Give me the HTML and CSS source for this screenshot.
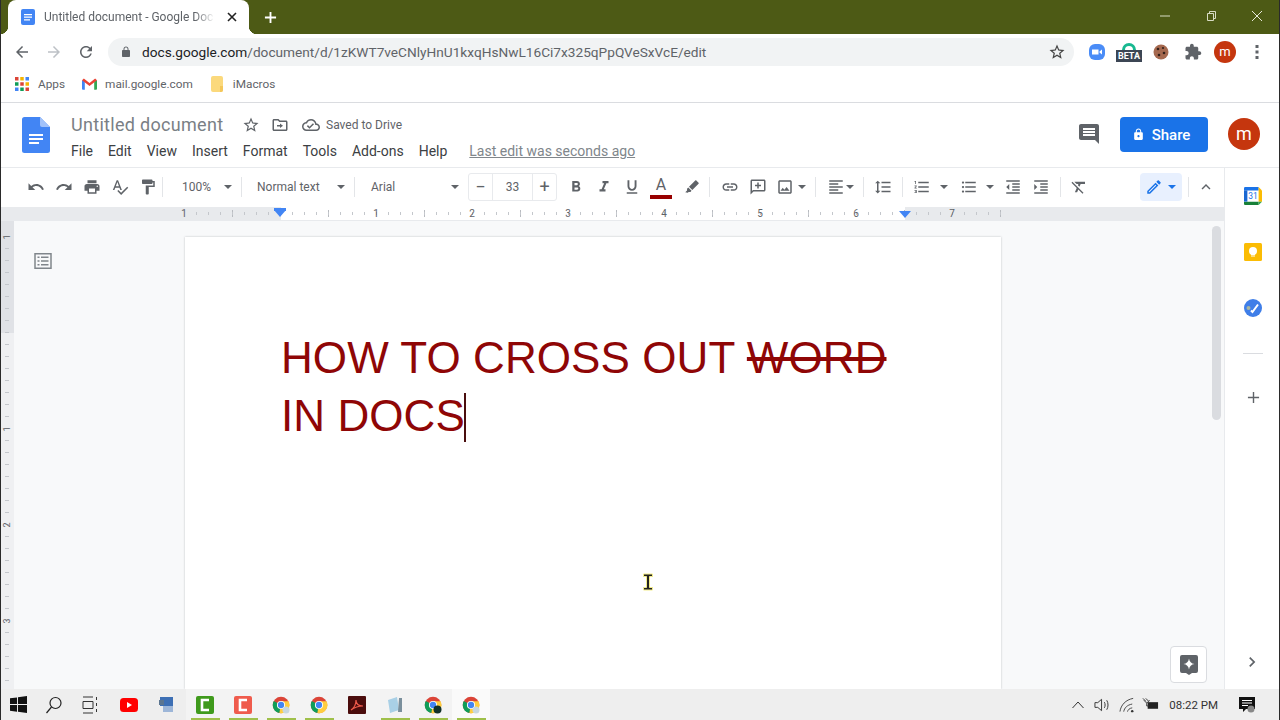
FILE: index.html
```html
<!DOCTYPE html>
<html>

<head>
    <meta charset="UTF-8">
    <title>Untitled document - Google Docs</title>
    <link rel="stylesheet" href="styles.css">
</head>

<body>
    <svg class="defs" width="0" height="0">
        <symbol id="chrome" viewBox="0 0 24 24">
            <circle cx="12" cy="12" r="11" fill="#db4437"></circle>
            <path d="M12 12 L2.4 6.6 A11 11 0 0 0 10 22.8 Z" fill="#0f9d58"></path>
            <path d="M12 7 H22 A11 11 0 0 1 10 22.8 Z" fill="#ffcd40"></path>
            <circle cx="12" cy="12" r="5.4" fill="#fff"></circle>
            <circle cx="12" cy="12" r="4.2" fill="#4285f4"></circle>
        </symbol>
    </svg>

    <div class="tabstrip">
        <div class="tab">
            <svg class="favicon" viewBox="0 0 16 16"><rect x="1" width="14" height="16" rx="2" fill="#4285f4"></rect><path d="M4 5h8v1.2H4zM4 7.6h8v1.2H4zM4 10.2h6v1.2H4z" fill="#fff"></path></svg>
            <span class="tab-title">Untitled document - Google Doc</span>
            <svg class="tab-x" viewBox="0 0 12 12"><path d="M2 2l8 8M10 2l-8 8" stroke="#222" stroke-width="1.6"></path></svg>
        </div>
        <svg class="newtab" viewBox="0 0 14 14"><path d="M7 1v12M1 7h12" stroke="#fff" stroke-width="2"></path></svg>
        <div class="winctl">
            <svg viewBox="0 0 12 12"><path d="M1 6h10" stroke="#d8dcc4"></path></svg>
            <svg viewBox="0 0 12 12"><path d="M2.5 3.5h6v7h-6zM4.5 3.5v-2h6v7h-2" fill="none" stroke="#d8dcc4"></path></svg>
            <svg viewBox="0 0 12 12"><path d="M1 1l10 10M11 1L1 11" stroke="#e6e8d8"></path></svg>
        </div>
    </div>

    <div class="omnirow">
        <svg class="nav" viewBox="0 0 24 24"><path fill="#5f6368" d="M20 11H7.83l5.59-5.59L12 4l-8 8 8 8 1.41-1.41L7.83 13H20v-2z"></path></svg>
        <svg class="nav" viewBox="0 0 24 24"><path fill="#bdc1c6" d="M12 4l-1.41 1.41L16.17 11H4v2h12.17l-5.58 5.59L12 20l8-8z"></path></svg>
        <svg class="nav" viewBox="0 0 24 24"><path fill="#5f6368" d="M17.65 6.35C16.2 4.9 14.21 4 12 4c-4.42 0-7.99 3.58-7.99 8s3.57 8 7.99 8c3.73 0 6.84-2.55 7.73-6h-2.08c-.82 2.33-3.04 4-5.65 4-3.31 0-6-2.69-6-6s2.69-6 6-6c1.66 0 3.14.69 4.22 1.78L13 11h7V4l-2.35 2.35z"></path></svg>
        <div class="omnibox">
            <svg class="lock" viewBox="0 0 24 24"><path fill="#5f6368" d="M18 8h-1V6c0-2.76-2.24-5-5-5S7 3.24 7 6v2H6c-1.1 0-2 .9-2 2v10c0 1.1.9 2 2 2h12c1.1 0 2-.9 2-2V10c0-1.1-.9-2-2-2zm-2.900 0H8.900V6c0-1.710 1.390-3.100 3.100-3.100s3.100 1.390 3.100 3.100v2z"></path></svg>
            <span class="url"><b>docs.google.com</b>/document/d/1zKWT7veCNlyHnU1kxqHsNwL16Ci7x325qPpQVeSxVcE/edit</span>
            <svg class="omni-star" viewBox="0 0 24 24"><path fill="#444" d="M22 9.240l-7.190-.620L12 2 9.190 8.630 2 9.240l5.460 4.730L5.820 21 12 17.270 18.180 21l-1.630-7.030L22 9.240zM12 15.400l-3.760 2.270 1-4.280-3.320-2.880 4.380-.380L12 6.100l1.710 4.040 4.380.380-3.320 2.880 1 4.280L12 15.400z"></path></svg>
        </div>
        <div class="ext">
            <svg viewBox="0 0 18 18"><rect x="1" y="1" width="16" height="16" rx="6" fill="#4a8cf7"></rect><path d="M4 6.500h6.500v5H4zM11.500 8.500l2.500-2v5l-2.500-2z" fill="#fff"></path></svg>
            <span class="beta">
                <svg viewBox="0 0 20 10"><path d="M3 10a7 7 0 0 1 14 0h-3a4 4 0 0 0-8 0z" fill="#17b890"></path></svg>
                <span class="beta-tag">BETA</span>
            </span>
            <svg viewBox="0 0 18 18"><circle cx="9" cy="9" r="7.500" fill="#a5694f"></circle><circle cx="6" cy="6" r="1.300" fill="#33201a"></circle><circle cx="11" cy="5" r="1.100" fill="#33201a"></circle><circle cx="12" cy="10" r="1.300" fill="#33201a"></circle><circle cx="7" cy="12" r="1.300" fill="#33201a"></circle></svg>
            <svg viewBox="0 0 24 24"><path fill="#5f6368" d="M20.500 11H19V7c0-1.100-.9-2-2-2h-4V3.500C13 2.120 11.880 1 10.500 1S8 2.120 8 3.500V5H4c-1.100 0-1.990.9-1.990 2v3.800H3.500c1.490 0 2.700 1.210 2.700 2.700s-1.210 2.700-2.700 2.700H2V20c0 1.100.9 2 2 2h3.800v-1.500c0-1.490 1.210-2.700 2.700-2.700 1.490 0 2.700 1.210 2.700 2.700V22H17c1.100 0 2-.9 2-2v-4h1.500c1.380 0 2.500-1.120 2.500-2.500S21.880 11 20.500 11z"></path></svg>
            <span class="chrome-avatar">m</span>
            <svg viewBox="0 0 18 18"><path fill="#5f6368" d="M7.500 2h3v3h-3zM7.500 7.500h3v3h-3zM7.500 13h3v3h-3z"></path></svg>
        </div>
    </div>

    <div class="bookmarks">
        <span class="bm">
            <svg class="apps" viewBox="0 0 12 12"><path fill="#db4437" d="M0 0h3v3H0z"></path><path fill="#f4b400" d="M4.500 0h3v3h-3z"></path><path fill="#4285f4" d="M9 0h3v3H9z"></path><path fill="#0f9d58" d="M0 4.500h3v3H0z"></path><path fill="#db4437" d="M4.500 4.500h3v3h-3z"></path><path fill="#f4b400" d="M9 4.500h3v3H9z"></path><path fill="#4285f4" d="M0 9h3v3H0z"></path><path fill="#0f9d58" d="M4.500 9h3v3h-3z"></path><path fill="#db4437" d="M9 9h3v3H9z"></path></svg>
            Apps
        </span>
        <span class="bm">
            <svg class="gmail" viewBox="0 0 16 12"><path fill="#4285f4" d="M0 2h3v10H1a1 1 0 0 1-1-1z"></path><path fill="#34a853" d="M13 2h3v9a1 1 0 0 1-1 1h-2z"></path><path fill="#ea4335" d="M0 2l2-2 6 5 6-5 2 2-8 6z"></path></svg>
            mail.google.com
        </span>
        <span class="bm">
            <svg class="folder" viewBox="0 0 14 16"><path fill="#fbd97c" d="M1 2a2 2 0 0 1 2-2h8a2 2 0 0 1 2 2v12a2 2 0 0 1-2 2H3a2 2 0 0 1-2-2z"></path><path fill="#f4c75a" d="M10 10h3v4a2 2 0 0 1-2 2h-1z"></path></svg>
            iMacros
        </span>
    </div>

    <div class="docs-head">
        <svg class="docs-logo" viewBox="0 0 28 36"><path fill="#4285f4" d="M2.500 0H18l10 10v23.500a2.500 2.500 0 0 1-2.500 2.500h-23A2.500 2.500 0 0 1 0 33.500v-31A2.500 2.500 0 0 1 2.500 0z"></path><path fill="#a1c2fa" d="M18 0l10 10H20a2 2 0 0 1-2-2z"></path><path fill="#fff" d="M7 17h14v2H7zM7 21h14v2H7zM7 25h10v2H7z"></path></svg>
        <div class="docs-title">
            <div class="title-row">
                <span class="doc-name">Untitled document</span>
                <svg class="ti star" viewBox="0 0 24 24"><path fill="#5f6368" d="M22 9.240l-7.190-.620L12 2 9.190 8.630 2 9.240l5.460 4.730L5.820 21 12 17.270 18.180 21l-1.630-7.030L22 9.240zM12 15.400l-3.760 2.270 1-4.280-3.320-2.880 4.380-.380L12 6.100l1.710 4.040 4.380.380-3.320 2.880 1 4.280L12 15.400z"></path></svg>
                <svg class="ti move" viewBox="0 0 24 24"><path fill="#5f6368" d="M20 6h-8l-2-2H4c-1.100 0-1.990.9-1.990 2L2 18c0 1.100.9 2 2 2h16c1.100 0 2-.9 2-2V8c0-1.100-.9-2-2-2zm0 12H4V6h5.170l2 2H20v10zm-8-4H8v-2h4v-2l4 3-4 3z"></path></svg>
                <svg class="ti cloud" viewBox="0 0 24 24"><path fill="#5f6368" d="M19.350 10.040C18.670 6.590 15.640 4 12 4 9.110 4 6.600 5.640 5.350 8.040 2.340 8.360 0 10.910 0 14c0 3.310 2.690 6 6 6h13c2.760 0 5-2.240 5-5 0-2.640-2.050-4.780-4.650-4.960zM19 18H6c-2.210 0-4-1.790-4-4 0-2.050 1.530-3.760 3.560-3.970l1.070-.11.5-.95C8.080 7.140 9.940 6 12 6c2.620 0 4.880 1.860 5.390 4.430l.3 1.500 1.530.11c1.560.1 2.780 1.410 2.780 2.960 0 1.650-1.350 3-3 3zm-9-3.820l-2.090-2.090L6.500 13.500 10 17l6.010-6.010-1.410-1.410z"></path></svg>
                <span class="saved">Saved to Drive</span>
            </div>
            <div class="menu">
                <span>File</span><span>Edit</span><span>View</span><span>Insert</span><span>Format</span><span>Tools</span><span>Add-ons</span><span>Help</span>
                <a class="last-edit">Last edit was seconds ago</a>
            </div>
        </div>
        <svg class="comments" viewBox="0 0 24 24"><path fill="#5f6368" d="M21.990 4c0-1.100-.89-2-1.990-2H4c-1.100 0-2 .9-2 2v12c0 1.100.9 2 2 2h14l4 4-.01-18zM18 14H6v-2h12v2zm0-3H6V9h12v2zm0-3H6V6h12v2z"></path></svg>
        <button class="share">
            <svg viewBox="0 0 24 24"><path fill="#fff" d="M18 8h-1V6c0-2.760-2.240-5-5-5S7 3.240 7 6v2H6c-1.100 0-2 .9-2 2v10c0 1.100.9 2 2 2h12c1.100 0 2-.9 2-2V10c0-1.100-.9-2-2-2zm-6 9c-1.100 0-2-.9-2-2s.9-2 2-2 2 .9 2 2-.9 2-2 2zm3.100-9H8.900V6c0-1.710 1.390-3.100 3.100-3.100 1.710 0 3.100 1.390 3.100 3.100v2z"></path></svg>
            Share
        </button>
        <span class="avatar">m</span>
    </div>

    <div class="workspace">
        <div class="editor">
            <div class="toolbar">
                <span class="ic"><svg viewBox="0 0 24 24"><path d="M12.500 8c-2.650 0-5.050.99-6.900 2.600L2 7v9h9l-3.620-3.620c1.390-1.160 3.160-1.880 5.120-1.880 3.540 0 6.550 2.310 7.600 5.500l2.370-.78C21.080 11.030 17.150 8 12.500 8z"></path></svg></span>
                <span class="ic"><svg viewBox="0 0 24 24"><path d="M18.400 10.600C16.550 8.990 14.150 8 11.500 8c-4.650 0-8.580 3.030-9.960 7.220L3.900 16c1.050-3.190 4.050-5.500 7.600-5.500 1.950 0 3.730.72 5.120 1.880L13 16h9V7l-3.600 3.600z"></path></svg></span>
                <span class="ic"><svg viewBox="0 0 24 24"><path d="M19 8H5c-1.660 0-3 1.340-3 3v6h4v4h12v-4h4v-6c0-1.660-1.340-3-3-3zm-3 11H8v-5h8v5zm3-7c-.55 0-1-.45-1-1s.45-1 1-1 1 .45 1 1-.45 1-1 1zm-1-9H6v4h12V3z"></path></svg></span>
                <span class="ic"><svg viewBox="0 0 24 24"><path d="M12.450 16h2.090L9.430 3H7.570L2.460 16h2.090l1.120-3h5.640l1.140 3zm-6.020-5L8.500 5.480 10.570 11H6.430zm15.160.59l-8.090 8.090L9.830 16l-1.410 1.410 5.090 5.090L23 13l-1.410-1.410z"></path></svg></span>
                <span class="ic"><svg viewBox="0 0 24 24"><path d="M18 4V3c0-.55-.45-1-1-1H5c-.55 0-1 .45-1 1v4c0 .55.45 1 1 1h12c.55 0 1-.45 1-1V6h1v4H9v11c0 .55.45 1 1 1h2c.55 0 1-.45 1-1v-9h8V4h-3z"></path></svg></span>
                <i class="sep"></i>
                <span class="sel sel-zoom">100%<i class="caret"></i></span>
                <i class="sep"></i>
                <span class="sel sel-style">Normal text<i class="caret"></i></span>
                <i class="sep"></i>
                <span class="sel sel-font">Arial<i class="caret"></i></span>
                <span class="size ml4">
                    <span class="size-btn">&minus;</span>
                    <span class="size-val">33</span>
                    <span class="size-btn">+</span>
                </span>
                <span class="ic ml5"><svg viewBox="0 0 24 24"><path d="M15.600 10.790c.97-.67 1.650-1.770 1.650-2.790 0-2.260-1.750-4-4-4H7v14h7.040c2.090 0 3.710-1.700 3.710-3.790 0-1.520-.86-2.820-2.150-3.420zM10 6.500h3c.83 0 1.500.67 1.500 1.500s-.67 1.500-1.500 1.500h-3v-3zm3.500 9H10v-3h3.500c.83 0 1.500.67 1.500 1.500s-.67 1.500-1.500 1.500z"></path></svg></span>
                <span class="ic"><svg viewBox="0 0 24 24"><path d="M10 4v3h2.210l-3.420 8H6v3h8v-3h-2.210l3.420-8H18V4z"></path></svg></span>
                <span class="ic"><svg viewBox="0 0 24 24"><path d="M12 17c3.310 0 6-2.690 6-6V3h-2.500v8c0 1.930-1.570 3.500-3.500 3.500S8.500 12.930 8.500 11V3H6v8c0 3.310 2.690 6 6 6zm-7 2v2h14v-2H5z"></path></svg></span>
                <span class="text-color ml1">A<i></i></span>
                <span class="ic ml3"><svg viewBox="0 0 24 24"><path d="M17.750 3.300l3 3c.4.4.4 1 0 1.400L12.400 16l-4.400-4.400 8.350-8.300c.4-.4 1-.4 1.400 0zM7 12.600l4.400 4.400-1.500 1.500H7.500L6.400 19.600 3 19l2.400-2.400v-2.400z"></path></svg></span>
                <i class="sep ml3"></i>
                <span class="ic ml6"><svg viewBox="0 0 24 24"><path d="M3.900 12c0-1.710 1.390-3.100 3.100-3.100h4V7H7c-2.760 0-5 2.240-5 5s2.240 5 5 5h4v-1.900H7c-1.710 0-3.100-1.390-3.100-3.100zM8 13h8v-2H8v2zm9-6h-4v1.900h4c1.710 0 3.100 1.390 3.100 3.100s-1.390 3.100-3.100 3.100h-4V17h4c2.760 0 5-2.240 5-5s-2.240-5-5-5z"></path></svg></span>
                <span class="ic"><svg viewBox="0 0 24 24"><path d="M20 2H4c-1.100 0-2 .9-2 2v18l4-4h14c1.100 0 2-.9 2-2V4c0-1.100-.9-2-2-2zm0 14H5.170L4 17.170V4h16v12zM11 6h2v3h3v2h-3v3h-2v-3H8V9h3z"></path></svg></span>
                <span class="ic mln1"><svg viewBox="0 0 24 24"><path d="M19 5v14H5V5h14m0-2H5c-1.100 0-2 .9-2 2v14c0 1.100.9 2 2 2h14c1.100 0 2-.9 2-2V5c0-1.100-.9-2-2-2zm-4.860 8.860l-3 3.870L9 13.140 6 17h12l-3.860-5.140z"></path></svg></span>
                <i class="caret mln1"></i>
                <i class="sep ml9"></i>
                <span class="ic ic-n ml10"><svg viewBox="0 0 24 24"><path d="M15 15H3v2h12v-2zm0-8H3v2h12V7zM3 13h18v-2H3v2zm0 8h18v-2H3v2zM3 3v2h18V3H3z"></path></svg></span>
                <i class="caret"></i>
                <i class="sep ml9"></i>
                <span class="ic ml5"><svg viewBox="0 0 24 24"><path d="M6 7h2.500L5 3.500 1.500 7H4v10H1.500L5 20.500 8.500 17H6V7zm4-2v2h12V5H10zm0 14h12v-2H10v2zm0-6h12v-2H10v2z"></path></svg></span>
                <i class="sep ml5"></i>
                <span class="ic ml5"><svg viewBox="0 0 24 24"><path d="M2 17h2v.5H3v1h1v.5H2v1h3v-4H2v1zm1-9h1V4H2v1h1v3zm-1 3h1.800L2 13.100v.9h3v-1H3.200L5 10.900V10H2v1zm5-6v2h14V5H7zm0 14h14v-2H7v2zm0-6h14v-2H7v2z"></path></svg></span>
                <i class="caret ml4"></i>
                <span class="ic ml7"><svg viewBox="0 0 24 24"><path d="M4 10.500c-.83 0-1.500.67-1.500 1.500s.67 1.500 1.500 1.500 1.500-.67 1.500-1.500-.67-1.500-1.500-1.500zm0-6c-.83 0-1.500.67-1.500 1.500S3.170 7.500 4 7.500 5.500 6.830 5.500 6 4.830 4.500 4 4.500zm0 12c-.83 0-1.500.68-1.500 1.500s.68 1.500 1.500 1.500 1.500-.68 1.500-1.500-.67-1.500-1.500-1.500zM7 19h14v-2H7v2zm0-6h14v-2H7v2zm0-8v2h14V5H7z"></path></svg></span>
                <i class="caret ml3"></i>
                <span class="ic ml5"><svg viewBox="0 0 24 24"><path d="M11 17h10v-2H11v2zm-8-5l4 4V8l-4 4zm0 9h18v-2H3v2zM3 3v2h18V3H3zm8 6h10V7H11v2zm0 4h10v-2H11v2z"></path></svg></span>
                <span class="ic"><svg viewBox="0 0 24 24"><path d="M3 21h18v-2H3v2zM3 8v8l4-4-4-4zm8 9h10v-2H11v2zM3 3v2h18V3H3zm8 6h10V7H11v2zm0 4h10v-2H11v2z"></path></svg></span>
                <i class="sep ml5"></i>
                <span class="ic ml4"><svg viewBox="0 0 24 24"><path d="M6 5v.18L8.820 8h2.400l-.72 1.680 2.100 2.100L14.210 8H20V5H6zM3.270 5L2 6.270l6.970 6.970L6.500 19h3l1.570-3.660L16.730 21 18 19.730 3.550 5.270 3.270 5z"></path></svg></span>
                <span class="mode">
                    <svg viewBox="0 0 24 24"><path d="M14.060 9.020l.92.92L5.920 19H5v-.92l9.060-9.060M17.660 3c-.25 0-.51.1-.7.29l-1.830 1.830 3.750 3.750 1.830-1.830c.39-.39.39-1.020 0-1.410l-2.340-2.340c-.2-.2-.45-.29-.71-.29zm-3.600 3.190L3 17.250V21h3.750L17.810 9.940l-3.750-3.750z"></path></svg>
                    <i class="caret"></i>
                </span>
                <i class="sep ml6"></i>
                <span class="ic ml3"><svg viewBox="0 0 24 24"><path d="M7.410 15.410L12 10.830l4.590 4.580L18 14l-6-6-6 6z"></path></svg></span>
            </div>

            <div class="ruler">
                <div class="ruler-track">
                    <div class="ruler-nums">
                        <span>1</span><span></span><span>1</span><span>2</span><span>3</span><span>4</span><span>5</span><span>6</span><span>7</span>
                    </div>
                </div>
                <i class="marker marker-left"></i>
                <i class="marker marker-right"></i>
            </div>

            <div class="canvas">
                <div class="vruler">
                    <span>1</span><span></span><span>1</span><span>2</span><span>3</span>
                </div>
                <svg class="outline" viewBox="0 0 18 18"><path fill="none" stroke="#80868b" stroke-width="1.500" d="M1 1.750h16v14.500H1z"></path><path fill="#80868b" d="M3.500 4.500h2v1.500h-2zM7 4.500h7.500v1.500H7zM3.500 8.200h2v1.500h-2zM7 8.200h7.500v1.500H7zM3.500 12h2v1.500h-2zM7 12h7.500v1.500H7z"></path></svg>
                <div class="page">
                    <p class="doc-text">HOW TO CROSS OUT <s>WORD</s> IN DOCS<i class="cursor"></i></p>
                </div>
                <i class="scrollthumb"></i>
                <svg class="ibeam" viewBox="0 0 12 18"><path fill="#222" stroke="#f4ee8a" stroke-width="1" d="M1.500 1h9v2.500H7.500v11h3V17h-9v-2.500h3v-11h-3z"></path></svg>
                <span class="explore">
                    <svg viewBox="0 0 18 20"><path fill="#5f6368" d="M2 0h14a2 2 0 0 1 2 2v14a2 2 0 0 1-2 2h-4l-3 2-3-2H2a2 2 0 0 1-2-2V2a2 2 0 0 1 2-2z"></path><path fill="#fff" d="M9 3.500c.5 3.200 2.300 5 5.500 5.500-3.200.5-5 2.300-5.500 5.500-.5-3.200-2.300-5-5.500-5.500 3.200-.5 5-2.300 5.500-5.500z"></path></svg>
                </span>
            </div>
        </div>

        <aside class="sidepanel">
            <svg class="side-ic side-cal" viewBox="1 1 16 16"><path fill="#fff" d="M4 4h10v10H4z"></path><path fill="#1a73e8" d="M1 4V2a1 1 0 0 1 1-1h12v3z"></path><path fill="#188038" d="M1 14h13v3H2a1 1 0 0 1-1-1z"></path><path fill="#1967d2" d="M1 4h3v10H1z"></path><path fill="#fbbc04" d="M14 1l3 3v10h-3z"></path><path fill="#34a853" d="M14 14h3l-3 3z"></path><text x="9" y="11.800" font-size="7.500" text-anchor="middle" fill="#1a73e8" font-family="Roboto">31</text></svg>
            <svg class="side-ic side-keep" viewBox="0 0 18 18"><rect width="18" height="18" rx="1.500" fill="#fbbc04"></rect><circle cx="9" cy="8" r="4" fill="#fff"></circle><path fill="#fff" d="M7 11h4v2.500H7z"></path><path fill="#fbbc04" d="M7 12h4v.5H7z"></path></svg>
            <svg class="side-ic side-tasks" viewBox="0 0 18 18"><circle cx="9" cy="9" r="9" fill="#3f7ee8"></circle><path fill="none" stroke="#fff" stroke-width="2" d="M7 11.500l1.500 1.500L14 5.500"></path><circle cx="4.500" cy="9" r="2" fill="#a9b6a0"></circle></svg>
            <i class="side-rule"></i>
            <svg class="side-plus" viewBox="0 0 14 14"><path d="M7 1v12M1 7h12" stroke="#5f6368" stroke-width="1.500"></path></svg>
            <svg class="side-chev" viewBox="0 0 24 24"><path fill="#5f6368" d="M8.590 16.590L13.170 12 8.590 7.410 10 6l6 6-6 6z"></path></svg>
        </aside>
    </div>

    <div class="taskbar">
        <svg class="win" viewBox="0 0 16 16"><path fill="#111" d="M0 2.200l6.600-.9v6.300H0zM7.500 1.200L16 0v7.600H7.500zM0 8.500h6.600v6.300L0 13.900zM7.500 8.500H16V16l-8.500-1.200z"></path></svg>
        <svg class="tk tk-search" viewBox="0 0 18 18"><circle cx="10.500" cy="7" r="5.500" fill="none" stroke="#222" stroke-width="1.200"></circle><path stroke="#222" stroke-width="1.200" d="M6.500 11l-5 6"></path></svg>
        <svg class="tk tk-view" viewBox="0 0 18 18"><path fill="none" stroke="#333" d="M2 1h10M2 17h10M2 5.500h10v7H2zM15.500 1v3M15.500 7v3M15.500 13v3"></path></svg>
        <div class="apps-run">
            <span class="app"><svg class="yt" viewBox="0 0 18 14"><rect width="18" height="14" rx="3.500" fill="#f00"></rect><path fill="#fff" d="M7 4l5 3-5 3z"></path></svg></span>
            <span class="app"><svg viewBox="0 0 18 18"><rect x="2" y="1" width="13" height="9" fill="#3d6fb4"></rect><path fill="#9db6d8" d="M5 10h10v6H5z"></path><path fill="#5b7590" d="M1 4h5v5H1z"></path></svg></span>
            <div class="apps-open">
                <span class="app on"><svg viewBox="0 0 18 18"><rect width="18" height="18" rx="2" fill="#3f9a1c"></rect><path fill="none" stroke="#fff" stroke-width="2.600" d="M13 4H6v10h7"></path></svg></span>
                <span class="app on"><svg viewBox="0 0 18 18"><rect width="18" height="18" rx="2" fill="#ef5b4c"></rect><path fill="none" stroke="#fff" stroke-width="2.600" d="M13 4H6v10h7"></path></svg></span>
                <span class="app on"><svg viewBox="0 0 18 18"><use href="#chrome"></use><circle cx="14" cy="14" r="3.500" fill="#c7d7e0"></circle></svg></span>
                <span class="app on"><svg viewBox="0 0 18 18"><use href="#chrome"></use></svg></span>
                <span class="app"><svg viewBox="0 0 18 18"><rect width="18" height="18" rx="1" fill="#4a0c0c"></rect><path fill="none" stroke="#ee5a4a" stroke-width="1.200" d="M3 14c3-2 5-6 5-10 0 4 3 6 7 6-4 0-8 1-12 4z"></path></svg></span>
                <span class="app on"><svg viewBox="0 0 18 18"><path fill="#a9d0e6" d="M2 4l9-3 2 13-9 3z"></path><path fill="#7a8f9c" d="M13 2h3v14h-4z"></path></svg></span>
                <span class="app on"><svg viewBox="0 0 18 18"><use href="#chrome"></use><circle cx="13.500" cy="13.500" r="4" fill="#10302a"></circle></svg></span>
                <span class="app on active"><svg viewBox="0 0 18 18"><use href="#chrome"></use><circle cx="14" cy="14" r="3.500" fill="#c7d7e0"></circle></svg></span>
            </div>
        </div>
        <div class="tray">
            <svg class="tray-up" viewBox="0 0 12 8"><path fill="none" stroke="#333" d="M.5 7L6 1l5.500 6"></path></svg>
            <svg class="tray-ic tray-sound" viewBox="0 0 18 16"><path fill="none" stroke="#333" d="M1 5.500h3L8 2v12l-4-3.500H1zM11 5c1 1.800 1 4.200 0 6M13.500 3c1.800 3 1.800 7 0 10"></path></svg>
            <svg class="tray-ic tray-wifi" viewBox="0 0 18 16"><path fill="none" stroke="#444" d="M1 15C2 8 7 2.500 15 1M5 15c.8-4 3.500-7 9-8M9 15c.5-2 2-3.500 5-4"></path><circle cx="14" cy="14.500" r="1.300" fill="#333"></circle></svg>
            <svg class="tray-ic tray-batt" viewBox="0 0 18 16"><path fill="#222" d="M6 5h11v7H6z"></path><path fill="none" stroke="#333" d="M1 1l3 3M4 1l3 3M2 3l3 3 3-3M5 6v3h2"></path></svg>
            <span class="clock">08:22 PM</span>
            <svg class="notif" viewBox="0 0 18 18"><path fill="#111" d="M1 1h16v12h-9l-3 3v-3H1z"></path><path fill="#fff" d="M4 4h10v1H4zM4 6.500h10v1H4zM4 9h6v1H4z"></path><circle cx="13" cy="13" r="3.500" fill="#888"></circle></svg>
        </div>
    </div>
</body>

</html>
```

FILE: styles.css
```css
html,
body {
    margin: 0;
    padding: 0;
    height: 100%;
    overflow: hidden;
}

* {
    box-sizing: border-box;
}

body {
    width: 1280px;
    height: 720px;
    display: flex;
    flex-direction: column;
    font-family: Roboto, "Liberation Sans", sans-serif;
    font-size: 14px;
    color: #3c4043;
    background: #fff;
    position: relative;
}

/* the video frame has a dark hairline on both sides */
body::after {
    content: "";
    position: absolute;
    top: 0;
    bottom: 0;
    left: 0;
    right: 0;
    border-left: 1px solid #2a2a2a;
    border-right: 1px solid #2a2a2a;
    pointer-events: none;
}

.defs {
    position: absolute;
}

i {
    display: block;
    font-style: normal;
}

svg {
    display: block;
    flex: none;
}

/* browser chrome */
.tabstrip {
    height: 34px;
    flex: none;
    background: #4d5a15;
    display: flex;
    align-items: center;
}

.tab {
    width: 241px;
    height: 34px;
    margin-left: 8px;
    padding: 0 11px 0 12px;
    background: #fff;
    border-radius: 8px 8px 0 0;
    display: flex;
    align-items: center;
    position: relative;
}

/* flared feet of the active tab */
.tab::before,
.tab::after {
    content: "";
    position: absolute;
    bottom: 0;
    width: 8px;
    height: 8px;
}

.tab::before {
    left: -8px;
    background: radial-gradient(circle at 0 0, transparent 8px, #fff 8.5px);
}

.tab::after {
    right: -8px;
    background: radial-gradient(circle at 100% 0, transparent 8px, #fff 8.5px);
}

.favicon {
    width: 16px;
    height: 16px;
}

.tab-title {
    width: 174px;
    margin-left: 8px;
    font-size: 12px;
    color: #5f6368;
    white-space: nowrap;
    -webkit-mask-image: linear-gradient(to right, #000 88%, transparent);
    mask-image: linear-gradient(to right, #000 88%, transparent);
}

.tab-x {
    width: 12px;
    height: 12px;
    margin-left: 11px;
}

.newtab {
    width: 13px;
    height: 13px;
    margin-left: 15px;
}

.winctl {
    margin-left: auto;
    margin-right: 17px;
    display: flex;
    gap: 34px;
    position: relative;
    top: -1px;
}

.winctl svg {
    width: 12px;
    height: 12px;
}

.omnirow {
    height: 36px;
    flex: none;
    padding-left: 13px;
    display: flex;
    align-items: center;
}

.nav {
    width: 18px;
    height: 18px;
    margin-right: 14px;
}

.omnibox {
    width: 968px;
    height: 28px;
    margin-left: -1px;
    padding: 0 8px 0 12px;
    background: #f1f3f4;
    border-radius: 14px;
    display: flex;
    align-items: center;
}

.lock {
    width: 12px;
    height: 12px;
}

.url {
    margin-left: 10px;
    font-size: 13.66px;
    color: #5f6368;
    white-space: nowrap;
}

.url b {
    font-weight: 400;
    color: #202124;
}

.omni-star {
    width: 18px;
    height: 18px;
    margin-left: auto;
}

.ext {
    display: flex;
    align-items: center;
    margin-left: 14px;
}

.ext > svg {
    width: 18px;
    height: 18px;
    margin-right: 14px;
}

.beta {
    width: 26px;
    height: 28px;
    margin: 0 10px 0 -4px;
    display: flex;
    flex-direction: column;
    align-items: center;
    padding-top: 2px;
}

.beta svg {
    width: 20px;
    height: 10px;
}

.beta-tag {
    background: #3c4654;
    color: #fff;
    font-size: 9px;
    font-weight: 700;
    line-height: 12px;
    padding: 0 1px;
    width: 26px;
    text-align: center;
}

.chrome-avatar {
    width: 22px;
    height: 22px;
    margin: 0 12px 0 -2px;
    border-radius: 50%;
    background: #c5360e;
    color: #fff;
    font-size: 13px;
    line-height: 21px;
    text-align: center;
}

.bookmarks {
    height: 33px;
    flex: none;
    padding: 0 0 4px 15px;
    display: flex;
    align-items: center;
    gap: 17px;
    border-bottom: 1px solid #dadce0;
}

.bm {
    display: flex;
    align-items: center;
    font-size: 11.8px;
    color: #5f6368;
}

.apps {
    width: 14px;
    height: 14px;
    margin-right: 9px;
}

.gmail {
    width: 15px;
    height: 12px;
    margin-right: 8px;
}

.folder {
    width: 14px;
    height: 16px;
    margin-right: 9px;
}

/* docs header */
.docs-head {
    height: 65px;
    flex: none;
    padding-left: 22px;
    display: flex;
    align-items: flex-start;
    border-bottom: 1px solid #e8eaed;
}

.docs-logo {
    width: 28px;
    height: 36px;
    margin-top: 14px;
}

.docs-title {
    width: 1021px;
    margin-left: 21px;
}

.title-row {
    height: 32px;
    margin-top: 2px;
    display: flex;
    align-items: center;
    padding-top: 6px;
}

.doc-name {
    font-size: 18px;
    color: #7a7f85;
    width: 151px;
    letter-spacing: .3px;
    white-space: nowrap;
}

.ti {
    width: 18px;
    height: 18px;
    margin-top: 2px;
}

.star {
    margin-left: 20px;
}

.move {
    margin-left: 11px;
}

.cloud {
    margin-left: 13px;
}

.saved {
    margin-left: 6px;
    padding-top: 2px;
    font-size: 12px;
    color: #5f6368;
}

.menu {
    margin-top: 4px;
    display: flex;
    gap: 15px;
    line-height: 20px;
    color: #3c4043;
}

.last-edit {
    margin-left: 7px;
    color: #80868b;
    text-decoration: underline;
}

.comments {
    width: 24px;
    height: 24px;
    margin: 19px 0 0 -15px;
}

.share {
    width: 88px;
    height: 35px;
    margin: 14px 0 0 19px;
    padding: 0 6px 0 0;
    border: 0;
    border-radius: 4px;
    background: #1a73e8;
    color: #fff;
    font: 500 15px Roboto, sans-serif;
    display: flex;
    align-items: center;
    justify-content: center;
    gap: 7px;
}

.share svg {
    width: 13px;
    height: 13px;
}

.avatar {
    width: 32px;
    height: 32px;
    margin: 15px 0 0 20px;
    border-radius: 50%;
    background: #c5360e;
    color: #fff;
    font-size: 18px;
    line-height: 31px;
    text-align: center;
}

/* docs workspace */
.workspace {
    flex: 1;
    min-height: 0;
    display: flex;
}

.editor {
    width: 1224px;
    display: flex;
    flex-direction: column;
}

.toolbar {
    height: 39px;
    flex: none;
    padding: 0 0 1px 22px;
    display: flex;
    align-items: center;
}

.ic {
    width: 28px;
    height: 28px;
    display: flex;
    align-items: center;
    justify-content: center;
    flex: none;
}

.ic svg,
.mode svg {
    width: 18px;
    height: 18px;
    fill: #5f6368;
}

.ic-n {
    width: 20px;
}

.sep {
    width: 1px;
    height: 20px;
    background: #e3e5e8;
    flex: none;
}

.caret {
    width: 0;
    height: 0;
    margin-left: 0;
    border: 4px solid transparent;
    border-top: 4px solid #5f6368;
    border-bottom: 0;
    flex: none;
}

.sel {
    height: 28px;
    display: flex;
    align-items: center;
    justify-content: space-between;
    font-size: 12px;
    color: #5f6368;
    flex: none;
}

.sel-zoom {
    width: 78px;
    padding: 0 9px 0 19px;
}

.sel-style {
    width: 112px;
    padding: 0 9px 0 15px;
}

.sel-font {
    width: 109px;
    padding: 0 5px 0 16px;
}

.size {
    width: 89px;
    height: 28px;
    border: 1px solid #e8eaed;
    border-radius: 3px;
    display: flex;
    flex: none;
    align-items: center;
}

.size-btn {
    width: 23px;
    text-align: center;
    font-size: 18px;
    color: #5f6368;
    line-height: 24px;
}

.size-val {
    flex: 1;
    height: 100%;
    border-left: 1px solid #e8eaed;
    border-right: 1px solid #e8eaed;
    text-align: center;
    font-size: 12px;
    line-height: 26px;
    color: #5f6368;
}

.text-color {
    width: 28px;
    height: 28px;
    flex: none;
    padding-top: 2px;
    text-align: center;
    font-size: 16px;
    line-height: 20px;
    color: #5f6368;
}

.text-color i {
    width: 22px;
    height: 4px;
    margin: 0 auto;
    background: #980000;
}

.mode {
    width: 42px;
    height: 28px;
    margin-left: 47px;
    padding-left: 5px;
    background: #e8f0fe;
    border-radius: 4px;
    display: flex;
    align-items: center;
    gap: 5px;
    flex: none;
}

.mode svg {
    fill: #1a73e8;
}

.mode .caret {
    border-top-color: #1a73e8;
}

.ml1 { margin-left: 1px; }
.ml3 { margin-left: 3px; }
.ml4 { margin-left: 4px; }
.ml5 { margin-left: 5px; }
.ml6 { margin-left: 6px; }
.ml7 { margin-left: 7px; }
.ml9 { margin-left: 9px; }
.ml10 { margin-left: 10px; }
.mln1 { margin-left: -1px; }

/* rulers */
.ruler {
    height: 14px;
    flex: none;
    background: #e8eaed;
    position: relative;
}

.ruler-track {
    width: 816px;
    height: 13px;
    margin-left: 185px;
    background-color: #fff;
    background-image:
        linear-gradient(to right, #e8eaed 96px, transparent 96px, transparent 720px, #e8eaed 720px);
    position: relative;
}

.ruler-track::after {
    content: "";
    position: absolute;
    left: 0;
    right: 0;
    top: 5px;
    height: 3px;
    background: repeating-linear-gradient(to right, transparent 0, transparent 11px, #c4c7cc 11px, #c4c7cc 12px);
}

.ruler-track::before {
    content: "";
    position: absolute;
    left: 47px;
    right: 0;
    top: 3px;
    height: 7px;
    background: repeating-linear-gradient(to right, #b8bbc0 0, #b8bbc0 1px, transparent 1px, transparent 96px);
}

.ruler-nums {
    display: flex;
    margin-left: -49px;
    position: relative;
    z-index: 1;
}

.ruler-nums span {
    width: 96px;
    flex: none;
    text-align: center;
    font-size: 10px;
    line-height: 13px;
    color: #5f6368;
}

/* indent handles sit over the ruler */
.marker {
    position: absolute;
    width: 0;
    height: 0;
    top: 4px;
    border: 6px solid transparent;
    border-top: 7px solid #4285f4;
    border-bottom: 0;
    z-index: 2;
}

.marker-left {
    left: 274px;
    top: 3px;
}

.marker-left::before {
    content: "";
    position: absolute;
    left: -6px;
    top: -9px;
    width: 12px;
    height: 3px;
    background: #4285f4;
}

.marker-right {
    left: 899px;
}

.canvas {
    flex: 1;
    min-height: 0;
    background: #f8f9fa;
    position: relative;
    display: flex;
    overflow: hidden;
}

.vruler {
    width: 14px;
    flex: none;
    background:
        repeating-linear-gradient(to bottom, transparent 0, transparent 11px, #c4c7cc 11px, #c4c7cc 12px) 5px 4px / 4px 100% no-repeat,
        linear-gradient(to bottom, #e0e2e6 112px, #eff0f2 112px);
    position: relative;
    font-size: 9px;
    color: #5f6368;
    padding-top: 11px;
    display: flex;
    flex-direction: column;
    align-items: center;
    gap: 86px;
    line-height: 10px;
}

.vruler span {
    transform: rotate(-90deg);
    height: 10px;
}

.outline {
    width: 18px;
    height: 18px;
    position: absolute;
    left: 34px;
    top: 31px;
}

.page {
    width: 816px;
    margin: 16px 0 0 171px;
    padding: 92px 96px 0 96px;
    background: #fff;
    box-shadow: 0 0 2px rgba(60, 64, 67, .3);
    flex: none;
}

.doc-text {
    margin: 0;
    font-family: "Liberation Sans", Arial, sans-serif;
    font-size: 44px;
    line-height: 58px;
    letter-spacing: .08px;
    color: #8f0606;
}

.cursor {
    display: inline-block;
    width: 2px;
    height: 49px;
    margin-left: -1px;
    vertical-align: -11px;
    background: #4a0e0e;
}

.scrollthumb {
    position: absolute;
    left: 1212px;
    top: 5px;
    width: 9px;
    height: 194px;
    border-radius: 5px;
    background: #dadce0;
}

.ibeam {
    position: absolute;
    left: 642px;
    top: 352px;
    width: 12px;
    height: 18px;
}

.explore {
    position: absolute;
    left: 1170px;
    top: 425px;
    width: 37px;
    height: 37px;
    background: #fff;
    border: 1px solid #dadce0;
    border-radius: 4px;
    display: flex;
    align-items: center;
    justify-content: center;
}

.explore svg {
    width: 18px;
    height: 20px;
}

/* side panel */
.sidepanel {
    width: 56px;
    flex: none;
    border-left: 1px solid #e8eaed;
    display: flex;
    flex-direction: column;
    align-items: center;
    padding: 19px 0 0 1px;
}

.side-ic {
    width: 18px;
    height: 18px;
    margin-bottom: 38px;
}

.side-rule {
    width: 20px;
    height: 1px;
    margin-top: -2px;
    background: #dadce0;
}

.side-plus {
    width: 13px;
    height: 13px;
    margin-top: 37px;
}

.side-chev {
    width: 20px;
    height: 20px;
    margin: 248px 2px 0 0;
}

/* windows taskbar */
.taskbar {
    height: 31px;
    flex: none;
    padding-left: 10px;
    background: #eeeeee;
    display: flex;
    align-items: center;
}

.win {
    width: 17px;
    height: 17px;
}

.tk {
    width: 18px;
    height: 18px;
}

.tk-search {
    margin-left: 18px;
}

.tk-view {
    margin-left: 18px;
}

.apps-run {
    margin-left: 11px;
    height: 31px;
    display: flex;
    align-self: stretch;
}

.apps-open {
    display: flex;
    background: #f3f3f3;
}

.app {
    width: 38px;
    height: 31px;
    display: flex;
    align-items: center;
    justify-content: center;
}

.app svg {
    width: 18px;
    height: 18px;
}

.app .yt {
    height: 14px;
}

/* running apps get a short green bar at the bottom of their slot */
.on {
    background: linear-gradient(#9fc04a, #9fc04a) center bottom / 29px 2px no-repeat;
}

.active {
    background-color: #fafafa;
}

.tray {
    margin-left: auto;
    padding-right: 24px;
    display: flex;
    align-items: center;
}

.tray-up {
    width: 12px;
    height: 8px;
}

.tray-ic {
    width: 17px;
    height: 16px;
}

.tray-sound {
    margin-left: 10px;
}

.tray-wifi {
    margin-left: 8px;
}

.tray-batt {
    margin-left: 6px;
}

.clock {
    margin-left: 10px;
    font-size: 11.5px;
    color: #333;
}

.notif {
    width: 18px;
    height: 18px;
    margin-left: 20px;
}
```
